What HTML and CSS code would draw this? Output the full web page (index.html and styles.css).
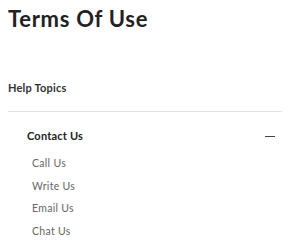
FILE: index.html
```html
<!DOCTYPE html>
<html lang="en">
<head>
    <meta charset="UTF-8">
    <meta name="viewport" content="width=device-width, initial-scale=1.0">
    <title>Terms Of Use</title>
    <link rel="stylesheet" href="styles.css">
</head>
<body>
    <div class="help-page">
        <h1>Terms Of Use</h1>
        <h3 class="topics-title">Help Topics</h3>
        <div class="topic">
            <div class="topic-head">
                <span>Contact Us</span>
                <span class="collapse-icon"></span>
            </div>
            <ul class="topic-links">
                <li><a href="#">Call Us</a></li>
                <li><a href="#">Write Us</a></li>
                <li><a href="#">Email Us</a></li>
                <li><a href="#">Chat Us</a></li>
            </ul>
        </div>
    </div>
</body>
</html>
```

FILE: styles.css
```css
* {
    margin: 0;
    padding: 0;
    box-sizing: border-box;
    font-family: Lato, "Open Sans", sans-serif;
}

body {
    background: white;
}

.help-page {
    padding: 6px 18px 0 8px;
}

.help-page h1 {
    font-size: 22px;
    line-height: 26px;
    font-weight: 700;
    letter-spacing: 0.7px;
    color: #222;
}

.topics-title {
    margin-top: 48px;
    font-size: 11px;
    line-height: 16px;
    font-weight: 700;
    letter-spacing: 0.2px;
    color: #333;
    padding-bottom: 15px;
    border-bottom: 1px solid #e2e2e2;
}

.topic-head {
    display: flex;
    justify-content: space-between;
    align-items: center;
    margin-top: 16px;
    padding: 0 7px 0 19px;
    font-size: 11px;
    line-height: 16px;
    font-weight: 700;
    letter-spacing: 0.2px;
    color: #222;
}

.collapse-icon {
    width: 10px;
    height: 1px;
    background: #444;
}

.topic-links {
    list-style: none;
    margin-top: 8px;
    padding-left: 24px;
}

.topic-links li {
    font-size: 10.5px;
    line-height: 22.5px;
}

.topic-links a {
    color: #666;
    text-decoration: none;
    letter-spacing: 0.3px;
}
```
